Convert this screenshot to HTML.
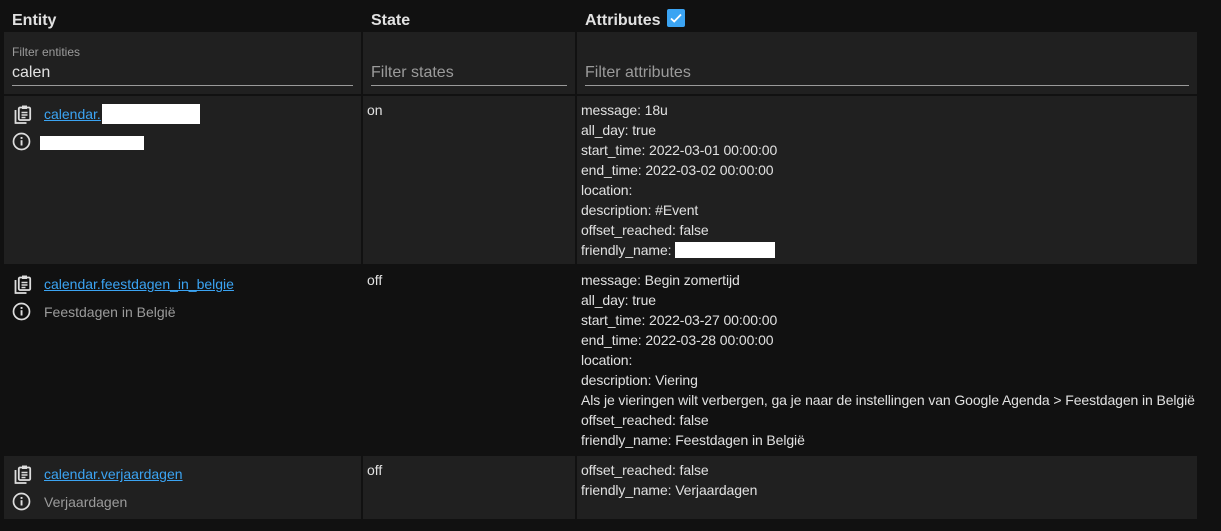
<!DOCTYPE html>
<html><head><style>
body{margin:0;background:#111111;width:1221px;height:531px;overflow:hidden;font-family:"Liberation Sans",sans-serif;color:#e1e1e1;font-size:14px;position:relative}
.a{position:absolute}
.cell{position:absolute;background:#202020}
.h{font-weight:bold;font-size:16px;color:#e1e1e1;top:12px}
.lbl{color:#9b9b9b}
.line{position:absolute;height:1px;background:#9a9a9a}
a{color:#3ba4f3;text-decoration:underline}
.attr{line-height:20px;color:#e1e1e1;letter-spacing:-0.1px;white-space:nowrap}
.mask{background:#fff;position:absolute}
</style></head><body>
<div class="a h" style="left:12px">Entity</div>
<div class="a h" style="left:371px">State</div>
<div class="a h" style="left:585px">Attributes</div>
<div class="a" style="left:667px;top:9px;width:18px;height:18px;background:#3ba4f3;border-radius:2px"><svg width="18" height="18" viewBox="0 0 18 18"><path d="M4 9.5l3.2 3L14 5.5" stroke="#fff" stroke-width="1.8" fill="none"/></svg></div>

<div class="cell" style="left:4px;top:32px;width:357px;height:62px"></div>
<div class="cell" style="left:363px;top:32px;width:212px;height:62px"></div>
<div class="cell" style="left:577px;top:32px;width:620px;height:62px"></div>
<div class="a lbl" style="left:12px;top:45px;font-size:12px">Filter entities</div>
<div class="a" style="left:12px;top:64px;font-size:16px;color:#e1e1e1">calen</div>
<div class="line" style="left:12px;top:85px;width:341px"></div>
<div class="a lbl" style="left:371px;top:64px;font-size:16px">Filter states</div>
<div class="line" style="left:371px;top:85px;width:196px"></div>
<div class="a lbl" style="left:585px;top:64px;font-size:16px">Filter attributes</div>
<div class="line" style="left:585px;top:85px;width:604px"></div>

<div class="cell" style="left:4px;top:96px;width:357px;height:168px"></div>
<div class="cell" style="left:363px;top:96px;width:212px;height:168px"></div>
<div class="cell" style="left:577px;top:96px;width:620px;height:168px"></div>
<div class="cell" style="left:4px;top:456px;width:357px;height:63px"></div>
<div class="cell" style="left:363px;top:456px;width:212px;height:63px"></div>
<div class="cell" style="left:577px;top:456px;width:620px;height:63px"></div>

<svg width="0" height="0" style="position:absolute"><defs>
<g id="clip"><path d="M2.5 6v13h11" stroke="#ddd" stroke-width="1.8" fill="none"/><rect x="5.8" y="3.5" width="11.4" height="12.5" rx="1.2" stroke="#ddd" stroke-width="1.8" fill="none"/><rect x="9" y="1.5" width="5" height="3.5" fill="#ddd"/><path d="M8.5 8.5h6M8.5 11h6M8.5 13.5h4" stroke="#ddd" stroke-width="1.4"/></g>
<g id="info"><circle cx="9.5" cy="9.5" r="8" stroke="#ddd" stroke-width="1.7" fill="none"/><rect x="8.6" y="8.2" width="1.9" height="5.3" fill="#ddd"/><rect x="8.6" y="5" width="1.9" height="1.9" fill="#ddd"/></g>
</defs></svg>

<svg class="a" style="left:13px;top:104px" width="20" height="20"><use href="#clip"/></svg>
<div class="a" style="left:44px;top:106px"><a>calendar.</a></div>
<div class="mask" style="left:102px;top:104px;width:98px;height:20px"></div>
<svg class="a" style="left:12px;top:132px" width="20" height="20"><use href="#info"/></svg>
<div class="mask" style="left:40px;top:136px;width:104px;height:14px"></div>
<div class="a" style="left:367px;top:102px">on</div>
<div class="a attr" style="left:581px;top:100px">message: 18u<br>all_day: true<br>start_time: 2022-03-01 00:00:00<br>end_time: 2022-03-02 00:00:00<br>location:<br>description: #Event<br>offset_reached: false<br>friendly_name: </div>
<div class="mask" style="left:675px;top:242px;width:100px;height:16px"></div>

<svg class="a" style="left:13px;top:274px" width="20" height="20"><use href="#clip"/></svg>
<div class="a" style="left:44px;top:276px"><a>calendar.feestdagen_in_belgie</a></div>
<svg class="a" style="left:12px;top:302px" width="20" height="20"><use href="#info"/></svg>
<div class="a lbl" style="left:44px;top:304px">Feestdagen in België</div>
<div class="a" style="left:367px;top:272px">off</div>
<div class="a attr" style="left:581px;top:270px">message: Begin zomertijd<br>all_day: true<br>start_time: 2022-03-27 00:00:00<br>end_time: 2022-03-28 00:00:00<br>location:<br>description: Viering<br>Als je vieringen wilt verbergen, ga je naar de instellingen van Google Agenda &gt; Feestdagen in België<br>offset_reached: false<br>friendly_name: Feestdagen in België</div>

<svg class="a" style="left:13px;top:464px" width="20" height="20"><use href="#clip"/></svg>
<div class="a" style="left:44px;top:466px"><a>calendar.verjaardagen</a></div>
<svg class="a" style="left:12px;top:492px" width="20" height="20"><use href="#info"/></svg>
<div class="a lbl" style="left:44px;top:494px">Verjaardagen</div>
<div class="a" style="left:367px;top:462px">off</div>
<div class="a attr" style="left:581px;top:460px">offset_reached: false<br>friendly_name: Verjaardagen</div>
</body></html>
